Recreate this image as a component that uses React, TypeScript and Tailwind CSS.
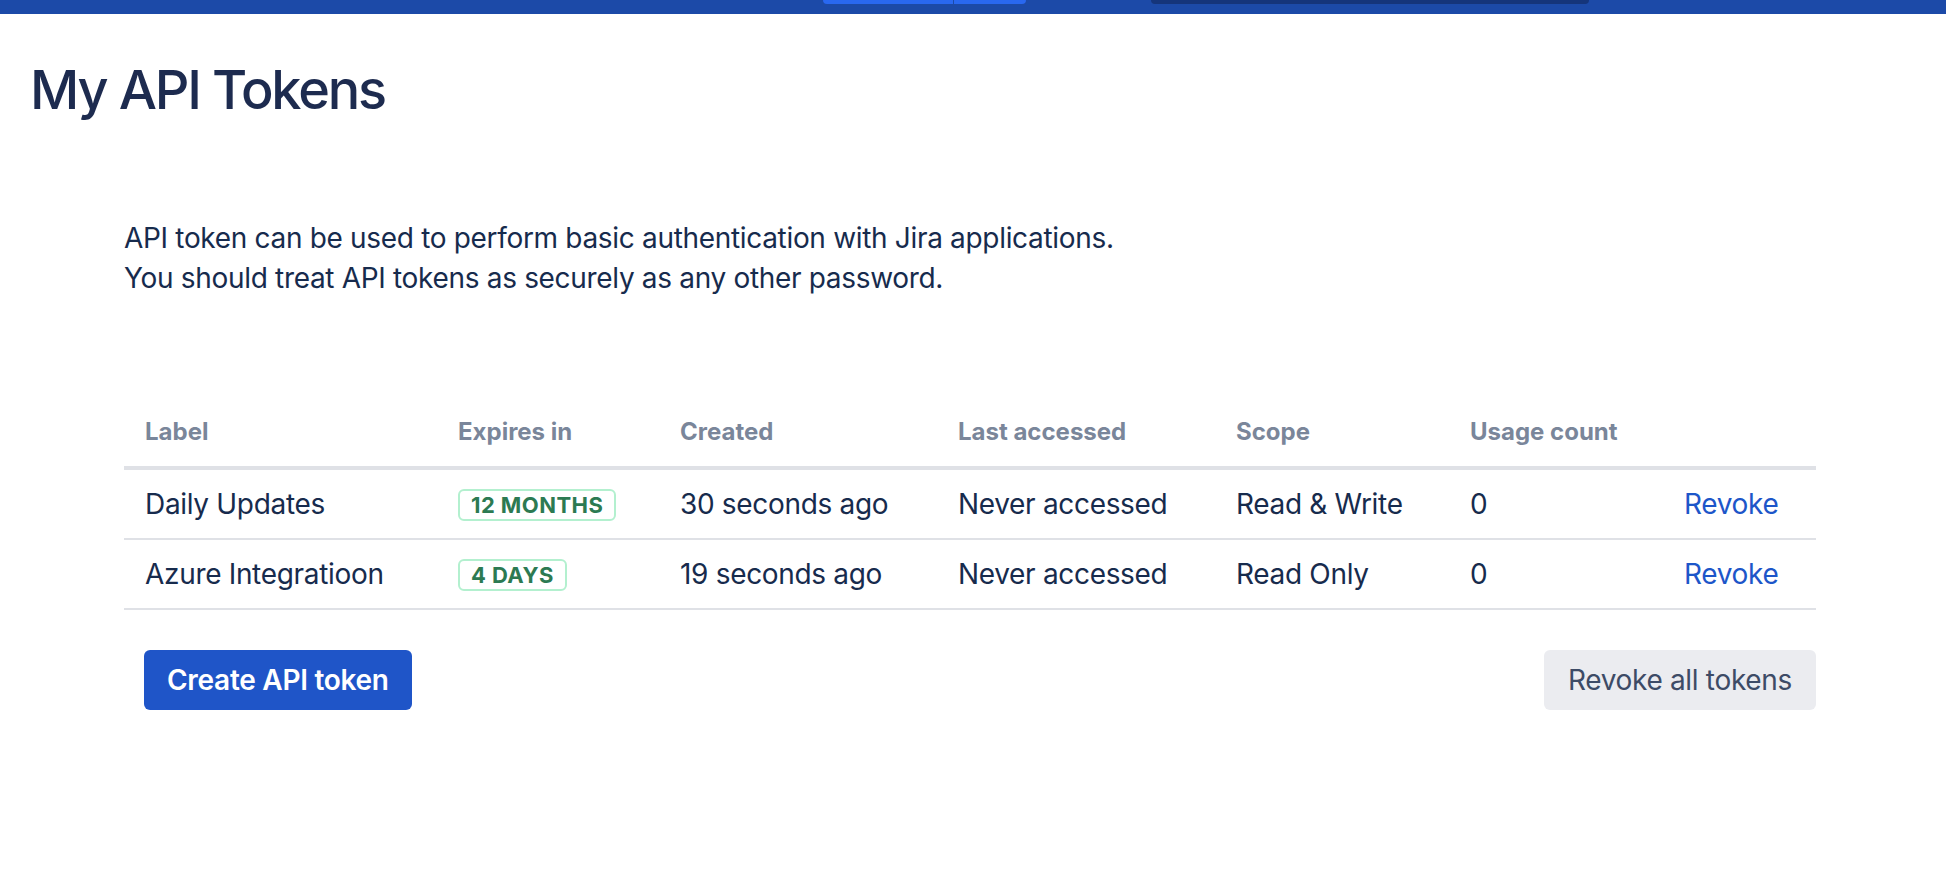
import React from "react";

const rows = [
  { label: "Daily Updates", expires: "12 MONTHS", created: "30 seconds ago", last: "Never accessed", scope: "Read & Write", count: "0" },
  { label: "Azure Integratioon", expires: "4 DAYS", created: "19 seconds ago", last: "Never accessed", scope: "Read Only", count: "0" },
];

const cols = "grid grid-cols-[314px_222px_278px_278px_234px_214px_1fr]";

export default function App() {
  return (
    <div className="min-h-[884px] w-[1946px] bg-white text-[#172b4d]" style={{ fontFamily: "Inter, 'Noto Sans', sans-serif" }}>
      <div className="flex h-[14px] items-start bg-[#1c4aa8]">
        <div className="ml-[823px] flex h-[4px] w-[203px] overflow-hidden rounded-b-[6px]">
          <div className="h-full w-[130px] bg-[#2968f0]" />
          <div className="h-full w-px bg-[#1c4aa8]" />
          <div className="h-full flex-1 bg-[#2968f0]" />
        </div>
        <div className="ml-[125px] h-[4px] w-[438px] rounded-b-[6px] bg-[#15357b]" />
      </div>

      <h1 className="mt-[44px] pl-[30px] text-[54px] font-medium leading-[64px] tracking-[-0.04em] text-[#1d2b4f]">
        My API Tokens
      </h1>

      <div className="pl-[124px] pr-[130px] tracking-[-0.02em]">
        <p className="mt-[96px] text-[28px] leading-[40px] text-[#172b4d]">
          API token can be used to perform basic authentication with Jira applications.
          <br />
          You should treat API tokens as securely as any other password.
        </p>

        <div className="mt-[118px] w-[1692px]">
          <div className={`${cols} border-b-4 border-[#dfe1e6] pb-[18px] text-[24px] font-bold leading-[32px] tracking-normal text-[#7a869a]`}>
            <div className="pl-[21px]">Label</div>
            <div className="pl-[20px]">Expires in</div>
            <div className="pl-[20px]">Created</div>
            <div className="pl-[20px]">Last accessed</div>
            <div className="pl-[20px]">Scope</div>
            <div className="pl-[20px]">Usage count</div>
            <div />
          </div>
          {rows.map((r) => (
            <div key={r.label} className={`${cols} items-center border-b-2 border-[#dfe1e6] py-[14px] text-[28px] leading-[40px]`}>
              <div className="pl-[21px]">{r.label}</div>
              <div className="flex pl-[20px] pt-[2px]">
                <span className="rounded-[6px] border-2 border-[#b3f0cf] px-[11px] text-[22px] font-bold leading-[28px] tracking-[0.02em] text-[#2c7a52]">
                  {r.expires}
                </span>
              </div>
              <div className="pl-[20px]">{r.created}</div>
              <div className="pl-[20px]">{r.last}</div>
              <div className="pl-[20px]">{r.scope}</div>
              <div className="pl-[20px]">{r.count}</div>
              <div className="pl-[20px]">
                <a className="text-[#1d56c9]" href="#">Revoke</a>
              </div>
            </div>
          ))}

          <div className="mt-[40px] flex items-center justify-between pl-[20px]">
            <button className="h-[60px] rounded-[6px] bg-[#1f55c8] px-[23px] text-[28px] font-semibold tracking-[-0.01em] text-white">
              Create API token
            </button>
            <button className="h-[60px] rounded-[6px] bg-[#ebecf0] px-[24px] text-[28px] text-[#3d4b66]">
              Revoke all tokens
            </button>
          </div>
        </div>
      </div>
    </div>
  );
}
